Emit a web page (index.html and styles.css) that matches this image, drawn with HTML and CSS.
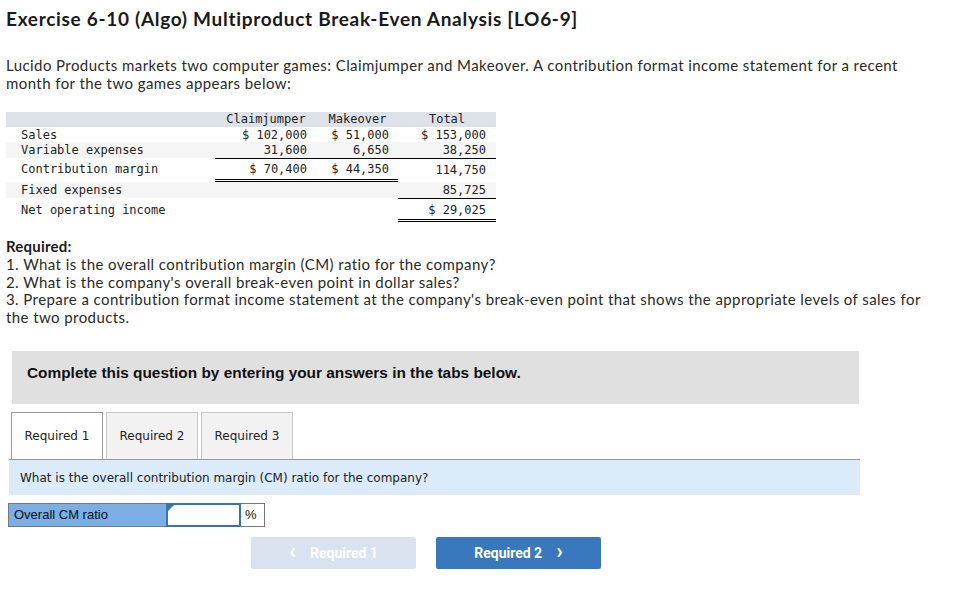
FILE: index.html
```html
<!DOCTYPE html>
<html>
<head>
<meta charset="utf-8">
<link rel="stylesheet" href="styles.css">
</head>
<body>
<div class="page">
  <h1 class="title">Exercise 6-10 (Algo) Multiproduct Break-Even Analysis [LO6-9]</h1>
  <p class="intro">Lucido Products markets two computer games: Claimjumper and Makeover. A contribution format income statement for a recent month for the two games appears below:</p>

  <div class="stmt">
    <div class="row hdr">
      <div></div><div class="ctr">Claimjumper</div><div class="ctr">Makeover</div><div class="ctr">Total</div>
    </div>
    <div class="row r-sales">
      <div class="lbl">Sales</div><div class="num">$ 102,000</div><div class="num nb">$ 51,000</div><div class="num">$ 153,000</div>
    </div>
    <div class="row r-var shade">
      <div class="lbl">Variable expenses</div><div class="num u1">31,600</div><div class="num nb u1">6,650</div><div class="num u1">38,250</div>
    </div>
    <div class="row r-cm">
      <div class="lbl">Contribution margin</div><div class="num u2">$ 70,400</div><div class="num nb u2">$ 44,350</div><div class="num low">114,750</div>
    </div>
    <div class="row r-fix shade">
      <div class="lbl">Fixed expenses</div><div></div><div></div><div class="num u1">85,725</div>
    </div>
    <div class="row r-net">
      <div class="lbl">Net operating income</div><div></div><div></div><div class="num u2">$ 29,025</div>
    </div>
  </div>

  <div class="required">
    <div class="req-head">Required:</div>
    <div>1. What is the overall contribution margin (CM) ratio for the company?</div>
    <div>2. What is the company's overall break-even point in dollar sales?</div>
    <div>3. Prepare a contribution format income statement at the company's break-even point that shows the appropriate levels of sales for the two products.</div>
  </div>

  <div class="notice">Complete this question by entering your answers in the tabs below.</div>

  <div class="tabs">
    <div class="tab active">Required 1</div>
    <div class="tab">Required 2</div>
    <div class="tab">Required 3</div>
  </div>
  <div class="panel-q">What is the overall contribution margin (CM) ratio for the company?</div>

  <div class="answer">
    <div class="ans-label">Overall CM ratio</div>
    <div class="ans-input"><span class="flag"></span></div>
    <div class="ans-unit">%</div>
  </div>

  <div class="nav">
    <div class="btn disabled"><span class="chev">&lsaquo;</span><span class="btxt">Required 1</span></div>
    <div class="btn primary"><span class="btxt">Required 2</span><span class="chev">&rsaquo;</span></div>
  </div>
</div>
</body>
</html>
```

FILE: styles.css
```css
html, body {
  margin: 0;
  padding: 0;
  background: #fff;
}
.page {
  width: 928px;
  padding: 0 6px;
  color: #222;
  font-family: Lato, "Open Sans", sans-serif;
}
.title {
  margin: 8px 0 0 0;
  font-size: 19px;
  line-height: 22px;
  font-weight: 700;
  letter-spacing: 0.7px;
  color: #1a1a1a;
  white-space: nowrap;
}
.intro {
  margin: 27px 0 0 0;
  font-size: 15px;
  line-height: 17.6px;
  letter-spacing: 0.42px;
  color: #2a2a2a;
}
.stmt {
  margin-top: 20px;
  width: 490px;
  font-family: "DejaVu Sans Mono", "Liberation Mono", monospace;
  font-size: 12px;
  line-height: 15px;
  color: #222;
}
.row {
  display: grid;
  grid-template-columns: 209px 102px 81px 98px;
}
.row > div {
  box-sizing: border-box;
  white-space: nowrap;
}
.hdr { height: 15px; background: #dde1e8; }
.ctr { text-align: center; }
.lbl { padding-left: 15px; }
.num { text-align: right; padding-right: 10px; }
.num.nb { padding-right: 9px; }
.r-sales { height: 15px; }
.r-sales > div { padding-top: 1px; }
.r-var { height: 16px; }
.r-var > div { padding-top: 1px; }
.shade { background: #f5f5f5; }
.u1 { border-bottom: 1px solid #000; }
.u2 { border-bottom: 3px double #000; }
.r-cm { height: 24px; }
.r-cm > div { padding-top: 4px; }
.r-cm > div.low { padding-top: 5px; }
.r-fix { height: 16px; }
.r-fix > div { padding-top: 1px; }
.r-net { height: 24px; }
.r-net > div { padding-top: 5px; }
.required {
  margin-top: 16px;
  font-size: 15px;
  line-height: 17.7px;
  letter-spacing: 0.42px;
  color: #2a2a2a;
}
.req-head { font-weight: 700; color: #1a1a1a; letter-spacing: 0.2px; }
.notice {
  margin: 24px 0 0 6px;
  width: 847px;
  height: 53px;
  padding: 0 0 8px 15px;
  box-sizing: border-box;
  background: #e0e0e0;
  display: flex;
  align-items: center;
  font-family: "Liberation Sans", Arial, sans-serif;
  font-weight: 700;
  font-size: 15.4px;
  color: #111;
}
.tabs {
  display: flex;
  gap: 3px;
  margin: 8px 0 0 5px;
  height: 47px;
}
.tab {
  width: 92px;
  height: 47px;
  box-sizing: border-box;
  border: 1px solid #c8c8c8;
  border-bottom: none;
  background: #f2f2f2;
  display: flex;
  align-items: center;
  justify-content: center;
  font-family: "DejaVu Sans", Verdana, sans-serif;
  font-size: 12px;
  color: #222;
}
.tab.active {
  background: #fff;
  border-color: #9a9a9a;
}
.panel-q {
  margin-left: 3px;
  width: 851px;
  border-top: 1px solid #999;
  background: #dbebf9;
  height: 36px;
  padding: 2px 0 0 11px;
  box-sizing: border-box;
  display: flex;
  align-items: center;
  font-family: "DejaVu Sans", Verdana, sans-serif;
  font-size: 12px;
  color: #222;
}
.answer {
  display: flex;
  margin: 8px 0 0 2px;
  height: 24px;
}
.ans-label {
  width: 158px;
  box-sizing: border-box;
  background: #7aaee4;
  border: 1px solid #777;
  border-right: none;
  padding-left: 5px;
  display: flex;
  align-items: center;
  font-family: "Liberation Sans", Arial, sans-serif;
  font-size: 13px;
  color: #111;
}
.ans-input {
  width: 75px;
  box-sizing: border-box;
  border: 2px solid #3a72b8;
  background: #fff;
  position: relative;
}
.flag {
  position: absolute;
  left: 0;
  top: 0;
  width: 0;
  height: 0;
  border-top: 6px solid #3a72b8;
  border-right: 6px solid transparent;
}
.ans-unit {
  width: 24px;
  box-sizing: border-box;
  border: 1px solid #777;
  border-left: none;
  display: flex;
  align-items: center;
  padding-left: 4px;
  font-family: "Liberation Sans", Arial, sans-serif;
  font-size: 13px;
  color: #111;
}
.nav {
  display: flex;
  gap: 20px;
  margin: 10px 0 0 245px;
}
.btn {
  width: 165px;
  height: 32px;
  border-radius: 2px;
  display: flex;
  align-items: center;
  justify-content: center;
  gap: 14px;
  font-family: Roboto, "Liberation Sans", sans-serif;
  font-weight: 700;
  font-size: 14px;
  color: #fff;
}
.btn.disabled { background: #d9e3f0; }
.btn.primary { background: #3a78bd; }
.chev {
  font-size: 22px;
  line-height: 1;
  margin-top: -3px;
  font-weight: 700;
}
```
